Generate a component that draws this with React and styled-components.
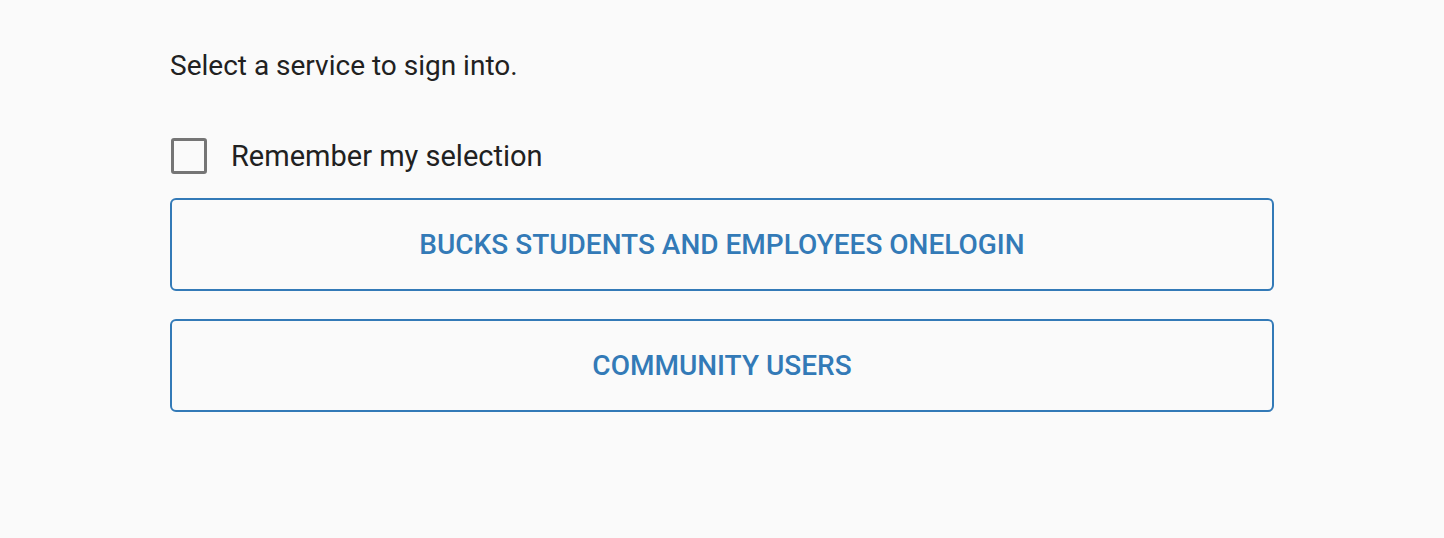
import { useState } from "react";
import styled, { createGlobalStyle } from "styled-components";

const GlobalStyle = createGlobalStyle`
  html, body {
    margin: 0;
    padding: 0;
    background: #fafafa;
    font-family: Roboto, "Liberation Sans", sans-serif;
    color: #212121;
  }
`;

const Page = styled.main`
  max-width: 1104px;
  margin: 0 auto;
  padding: 48px 0 0;
`;

const Intro = styled.p`
  margin: 0 0 54px;
  font-size: 28px;
  line-height: 36px;
`;

const RememberRow = styled.label`
  display: flex;
  align-items: center;
  gap: 24px;
  height: 36px;
  margin-bottom: 24px;
  font-size: 29px;
  cursor: pointer;
`;

const Box = styled.span`
  box-sizing: border-box;
  flex: none;
  width: 36px;
  height: 36px;
  margin-left: 1px;
  border: 3px solid ${(p) => (p.checked ? "#337ab7" : "#757575")};
  border-radius: 3px;
  background: ${(p) => (p.checked ? "#337ab7" : "transparent")};
  display: flex;
  align-items: center;
  justify-content: center;
  color: #fff;
`;

const HiddenInput = styled.input`
  display: none;
`;

const ServiceList = styled.div`
  display: flex;
  flex-direction: column;
  gap: 28px;
`;

const ServiceButton = styled.button`
  box-sizing: border-box;
  width: 100%;
  height: 93px;
  border: 2px solid #337ab7;
  border-radius: 6px;
  background: transparent;
  color: #337ab7;
  font-family: Roboto, "Liberation Sans", sans-serif;
  font-weight: 500;
  font-size: 28px;
  text-transform: uppercase;
  cursor: pointer;
`;

const services = ["Bucks Students and Employees OneLogin", "Community Users"];

export default function App() {
  const [remember, setRemember] = useState(false);

  return (
    <>
      <GlobalStyle />
      <Page>
        <Intro>Select a service to sign into.</Intro>
        <RememberRow>
          <HiddenInput
            type="checkbox"
            checked={remember}
            onChange={(e) => setRemember(e.target.checked)}
          />
          <Box checked={remember}>
            {remember && (
              <svg width="24" height="24" viewBox="0 0 24 24" fill="none" stroke="currentColor" strokeWidth="3">
                <path d="M5 12l5 5 9-10" />
              </svg>
            )}
          </Box>
          Remember my selection
        </RememberRow>
        <ServiceList>
          {services.map((name) => (
            <ServiceButton key={name}>{name}</ServiceButton>
          ))}
        </ServiceList>
      </Page>
    </>
  );
}
